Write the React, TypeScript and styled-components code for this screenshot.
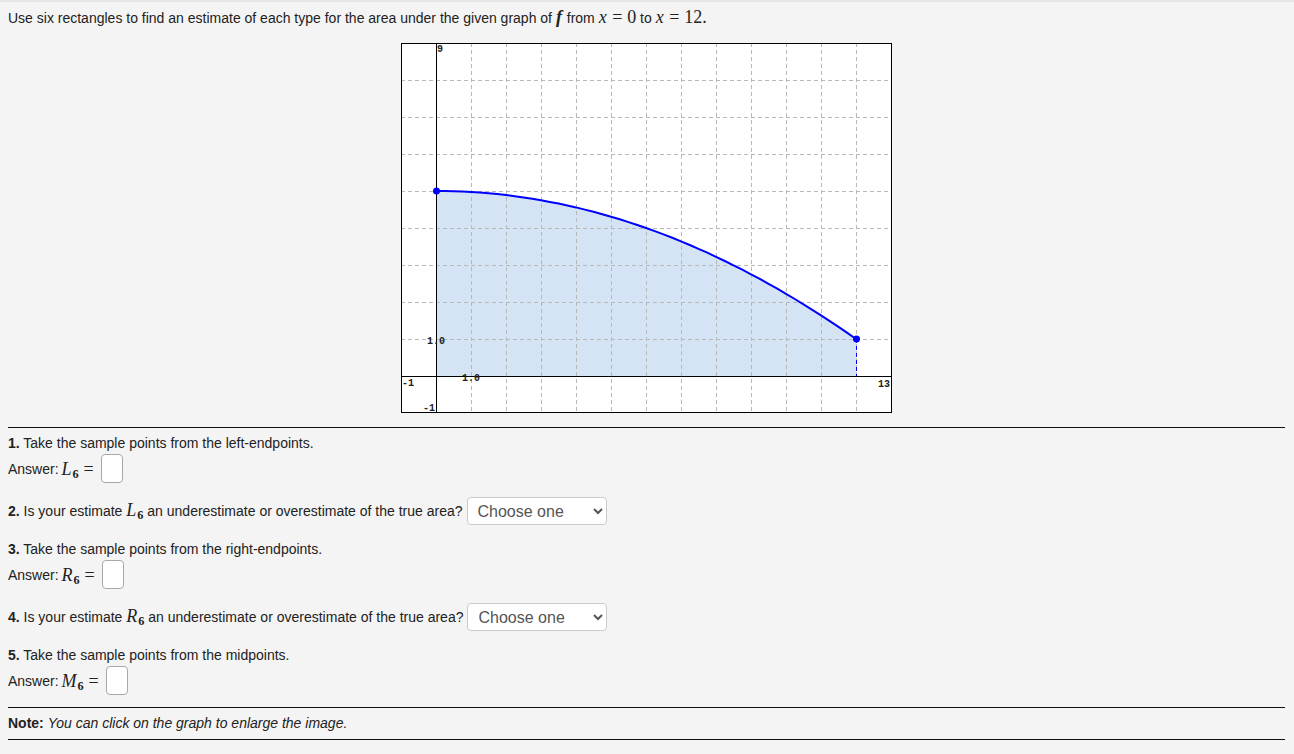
import React from "react";
import styled, { createGlobalStyle } from "styled-components";

const GlobalStyle = createGlobalStyle`
  html, body {
    margin: 0;
    background: #f4f4f4;
  }
  body {
    font-family: "Liberation Sans", Arial, sans-serif;
    font-size: 14px;
    color: #222;
  }
`;

const Page = styled.div`
  border-top: 2px solid #e6e6e6;
  padding: 0 9px 0 8px;
`;

const Intro = styled.p`
  margin: 6px 0 0;
  line-height: 20px;
  height: 21px;
`;

const Math = styled.span`
  font-family: "Liberation Serif", "DejaVu Serif", serif;
  font-size: 18px;
  line-height: 1;
  white-space: nowrap;
`;

const Var = styled.i<{ $bold?: boolean }>`
  font-style: italic;
  font-weight: ${(p) => (p.$bold ? 700 : 400)};
  padding-right: 1px;
`;

const Sub = styled.span`
  font-size: 0.68em;
  font-style: normal;
  font-weight: 700;
  position: relative;
  top: 0.25em;
`;

const Op = styled.span`
  margin: 0 0.26em;
`;

const Figure = styled.figure`
  margin: 14px 0 0;
  display: flex;
  justify-content: center;
  cursor: pointer;
`;

const Rule = styled.hr`
  margin: 0;
  border: none;
  border-top: 1px solid #111;
`;

const Questions = styled.div`
  margin-top: 14px;
`;

const Section = styled.div`
  padding-top: 5px;
  padding-bottom: 12px;
  display: flex;
  flex-direction: column;
  gap: 14px;
`;

const Block = styled.div`
  display: flex;
  flex-direction: column;
  gap: 1px;
`;

const Line = styled.div<{ $tall?: boolean }>`
  height: ${(p) => (p.$tall ? "28px" : "20px")};
  line-height: 20px;
  display: flex;
  align-items: center;
  gap: 4px;
`;

const Num = styled.b`
  font-weight: 700;
`;

const AnswerRow = styled.div`
  display: flex;
  align-items: center;
  height: 29px;
  gap: 3px;
`;

const AnswerBox = styled.input`
  box-sizing: border-box;
  width: 22px;
  height: 29px;
  margin: 0;
  padding: 0;
  border: 1px solid #a8a8a8;
  border-radius: 4px;
  background: #fff;
`;

const Select = styled.select`
  box-sizing: border-box;
  width: 140px;
  height: 28px;
  border: 1px solid #ccc;
  border-radius: 4px;
  background: #fff;
  color: #555;
  font-family: "Liberation Sans", Arial, sans-serif;
  font-size: 16px;
  padding: 0 6px;
`;

const Note = styled.div`
  line-height: 20px;
  padding: 5px 0 6px;
  em {
    font-style: italic;
  }
`;

const X = (x: number) => 35 + 35 * x;
const Y = (y: number) => 37 * (9 - y);
const f = (x: number) => 5 - (x * x) / 36;

const curve: string[] = [];
for (let i = 0; i <= 48; i++) {
  const x = i / 4;
  curve.push(`${X(x).toFixed(1)},${Y(f(x)).toFixed(1)}`);
}

function Graph() {
  const verticals = [1, 2, 3, 4, 5, 6, 7, 8, 9, 10, 11, 12];
  const horizontals = [1, 2, 3, 4, 5, 6, 7, 8];
  return (
    <svg width="491" height="370" viewBox="0 0 491 370">
      <rect x="0" y="0" width="491" height="370" fill="#fff" />
      <polygon
        points={`${X(0)},${Y(0)} ${curve.join(" ")} ${X(12)},${Y(0)}`}
        fill="#d5e4f4"
      />
      {verticals.map((v) => (
        <line key={"v" + v} x1={X(v) + 0.5} y1="0" x2={X(v) + 0.5} y2="370" stroke="#b8b8b8" strokeDasharray="4 3" />
      ))}
      {horizontals.map((h) => (
        <line key={"h" + h} x1="0" y1={Y(h) + 0.5} x2="491" y2={Y(h) + 0.5} stroke="#b8b8b8" strokeDasharray="4 3" />
      ))}
      <line x1="0" y1={Y(0) + 0.5} x2="491" y2={Y(0) + 0.5} stroke="#000" />
      <line x1={X(0) + 0.5} y1="0" x2={X(0) + 0.5} y2="370" stroke="#000" />
      <line x1={X(12) + 0.5} y1={Y(1)} x2={X(12) + 0.5} y2={Y(0)} stroke="#0000ff" strokeDasharray="4 3" />
      <polyline points={curve.join(" ")} fill="none" stroke="#0000ff" strokeWidth="2" />
      <circle cx={X(0) + 0.5} cy={Y(5)} r="3.5" fill="#0000ff" />
      <circle cx={X(12) + 0.5} cy={Y(1)} r="3.5" fill="#0000ff" />
      <g fontFamily='"Liberation Mono", "DejaVu Sans Mono", monospace' fontSize="10" fontWeight="700" fill="#222">
        <text x="36" y="9">9</text>
        <text x="26" y="301">1.0</text>
        <text x="61" y="338">1.0</text>
        <text x="1" y="343">-1</text>
        <text x="22" y="368">-1</text>
        <text x="477" y="344">13</text>
      </g>
      <rect x="0.5" y="0.5" width="490" height="369" fill="none" stroke="#000" />
    </svg>
  );
}

function Answer({ name }: { name: string }) {
  return (
    <AnswerRow>
      Answer:{" "}
      <Math>
        <Var>{name}</Var>
        <Sub>6</Sub>
        <Op>=</Op>
      </Math>
      <AnswerBox type="text" aria-label={`${name}6`} />
    </AnswerRow>
  );
}

function Choose() {
  return (
    <Select defaultValue="">
      <option value="">Choose one</option>
      <option value="under">underestimate</option>
      <option value="over">overestimate</option>
    </Select>
  );
}

export default function App() {
  return (
    <>
      <GlobalStyle />
      <Page>
        <Intro>
          Use six rectangles to find an estimate of each type for the area under the given graph of{" "}
          <Math>
            <Var $bold>f</Var>
          </Math>{" "}
          from{" "}
          <Math>
            <Var>x</Var>
            <Op>=</Op>0
          </Math>{" "}
          to{" "}
          <Math>
            <Var>x</Var>
            <Op>=</Op>12.
          </Math>
        </Intro>
        <Figure>
          <Graph />
        </Figure>
        <Questions>
          <Rule />
          <Section>
            <Block>
              <Line>
                <span>
                  <Num>1.</Num> Take the sample points from the left-endpoints.
                </span>
              </Line>
              <Answer name="L" />
            </Block>
            <Line $tall>
              <span>
                <Num>2.</Num> Is your estimate{" "}
                <Math>
                  <Var>L</Var>
                  <Sub>6</Sub>
                </Math>{" "}
                an underestimate or overestimate of the true area?
              </span>
              <Choose />
            </Line>
            <Block>
              <Line>
                <span>
                  <Num>3.</Num> Take the sample points from the right-endpoints.
                </span>
              </Line>
              <Answer name="R" />
            </Block>
            <Line $tall>
              <span>
                <Num>4.</Num> Is your estimate{" "}
                <Math>
                  <Var>R</Var>
                  <Sub>6</Sub>
                </Math>{" "}
                an underestimate or overestimate of the true area?
              </span>
              <Choose />
            </Line>
            <Block>
              <Line>
                <span>
                  <Num>5.</Num> Take the sample points from the midpoints.
                </span>
              </Line>
              <Answer name="M" />
            </Block>
          </Section>
          <Rule />
          <Note>
            <Num>Note:</Num> <em>You can click on the graph to enlarge the image.</em>
          </Note>
          <Rule />
        </Questions>
      </Page>
    </>
  );
}
